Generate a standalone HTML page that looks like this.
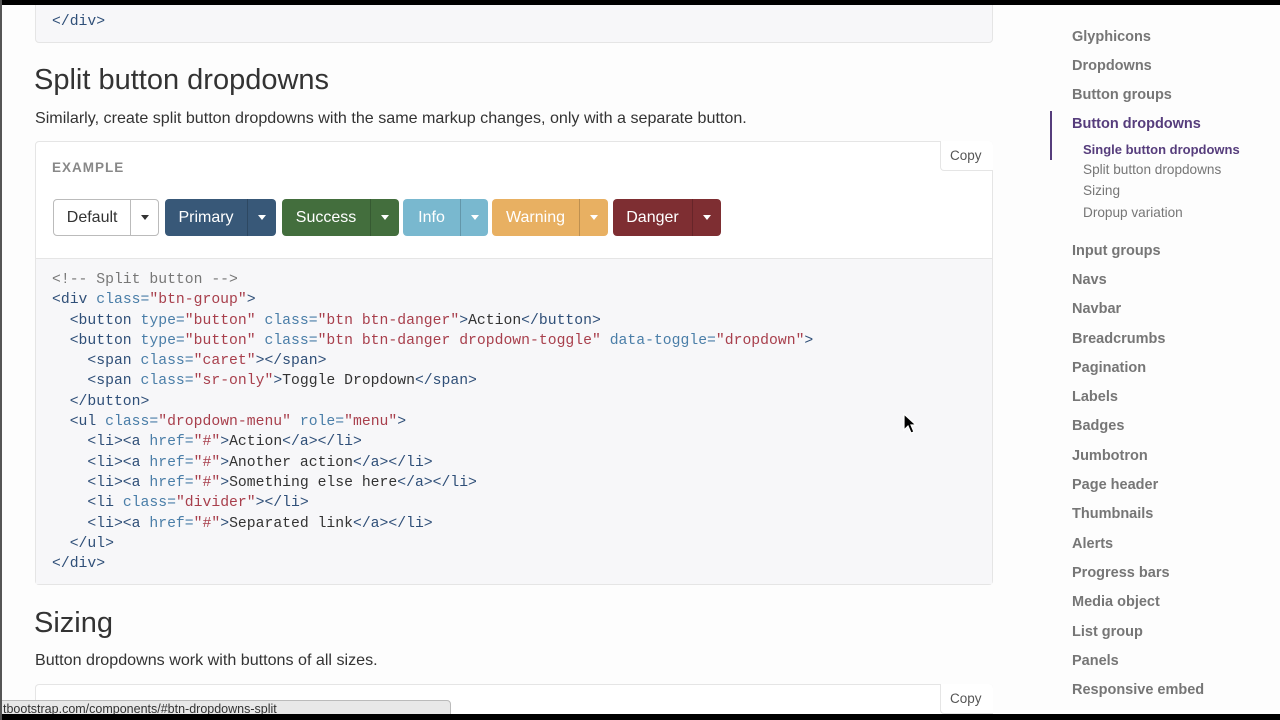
<!DOCTYPE html>
<html><head><meta charset="utf-8"><style>
*{box-sizing:border-box;margin:0;padding:0}
html,body{width:1280px;height:720px;overflow:hidden}
body{background:#fdfdfd;font-family:"Liberation Sans",sans-serif;color:#333;position:relative}
.abs{position:absolute}
.topbar{left:0;top:0;width:1280px;height:5px;background:#000}
.botbar{left:0;top:714px;width:1280px;height:6px;background:#000}
.leftbar{left:0;top:0;width:2px;height:720px;background:#555}
.box{border:1px solid #e5e5e5;border-radius:4px}
.code{background:#f7f7f9;font-family:"Liberation Mono",monospace;font-size:14.75px;line-height:20.3px;color:#333;white-space:pre}
.nt{color:#2f4f78}.na{color:#4a7ea8}.s{color:#a83f4c}.c{color:#777}
h2{font-size:29px;font-weight:500;color:#333}
p{font-size:16.1px}
.copy{border-left:1px solid #e5e5e5;border-bottom:1px solid #e5e5e5;font-size:13.5px;color:#555;padding:7px 9px;border-radius:0 4px 0 4px;background:#fff}
.btn{position:absolute;top:199px;height:37px;border-radius:4px;color:#fff;font-size:16px;display:flex}
.btn span{display:flex;align-items:center;justify-content:center;height:100%}
.btn .cr{border-left:1px solid rgba(0,0,0,.18)}
.btn .cr:after{content:"";border-top:5px solid currentColor;border-left:4.5px solid transparent;border-right:4.5px solid transparent}
.side{left:1072px;font-size:14.5px;font-weight:bold;color:#767676}
.sub{left:1083px;font-size:13.6px;color:#767676}
</style></head><body>
<div class="abs box code" style="left:35px;top:-20px;width:958px;height:63px;padding:0 16px;line-height:20px"><span style="position:absolute;top:31px;left:16px"><span class="nt">&lt;/div&gt;</span></span></div>

<h2 class="abs" style="left:34px;top:64px">Split button dropdowns</h2>
<p class="abs" style="left:35px;top:109px">Similarly, create split button dropdowns with the same markup changes, only with a separate button.</p>

<div class="abs" style="left:35px;top:141px;width:958px;height:444px;border:1px solid #e5e5e5;border-radius:4px;background:#fff"></div>
<div class="abs copy" style="left:940px;top:141px;width:53px;height:30px">Copy</div>
<div class="abs" style="left:52px;top:160px;font-size:13.5px;font-weight:bold;color:#888;letter-spacing:1px">EXAMPLE</div>

<div class="btn" style="left:53px;width:106px;background:#fff;border:1px solid #bbb;color:#333"><span style="width:77px">Default</span><span class="cr" style="width:28px;border-left-color:#bbb"></span></div>
<div class="btn" style="left:165px;width:111px;background:#385878"><span style="width:82px">Primary</span><span class="cr" style="width:29px"></span></div>
<div class="btn" style="left:282px;width:117px;background:#436e3d"><span style="width:88px">Success</span><span class="cr" style="width:29px"></span></div>
<div class="btn" style="left:403px;width:85px;background:#79b8cf"><span style="width:57px">Info</span><span class="cr" style="width:28px"></span></div>
<div class="btn" style="left:492px;width:116px;background:#e8b062"><span style="width:87px">Warning</span><span class="cr" style="width:29px"></span></div>
<div class="btn" style="left:613px;width:108px;background:#7e2e32"><span style="width:79px">Danger</span><span class="cr" style="width:29px"></span></div>

<div class="abs code" style="left:36px;top:258px;width:956px;height:326px;border-top:1px solid #e5e5e5;padding:11px 16px"><span class="c">&lt;!-- Split button --&gt;</span>
<span class="nt">&lt;div</span> <span class="na">class=</span><span class="s">"btn-group"</span><span class="nt">&gt;</span>
  <span class="nt">&lt;button</span> <span class="na">type=</span><span class="s">"button"</span> <span class="na">class=</span><span class="s">"btn btn-danger"</span><span class="nt">&gt;</span>Action<span class="nt">&lt;/button&gt;</span>
  <span class="nt">&lt;button</span> <span class="na">type=</span><span class="s">"button"</span> <span class="na">class=</span><span class="s">"btn btn-danger dropdown-toggle"</span> <span class="na">data-toggle=</span><span class="s">"dropdown"</span><span class="nt">&gt;</span>
    <span class="nt">&lt;span</span> <span class="na">class=</span><span class="s">"caret"</span><span class="nt">&gt;&lt;/span&gt;</span>
    <span class="nt">&lt;span</span> <span class="na">class=</span><span class="s">"sr-only"</span><span class="nt">&gt;</span>Toggle Dropdown<span class="nt">&lt;/span&gt;</span>
  <span class="nt">&lt;/button&gt;</span>
  <span class="nt">&lt;ul</span> <span class="na">class=</span><span class="s">"dropdown-menu"</span> <span class="na">role=</span><span class="s">"menu"</span><span class="nt">&gt;</span>
    <span class="nt">&lt;li&gt;&lt;a</span> <span class="na">href=</span><span class="s">"#"</span><span class="nt">&gt;</span>Action<span class="nt">&lt;/a&gt;&lt;/li&gt;</span>
    <span class="nt">&lt;li&gt;&lt;a</span> <span class="na">href=</span><span class="s">"#"</span><span class="nt">&gt;</span>Another action<span class="nt">&lt;/a&gt;&lt;/li&gt;</span>
    <span class="nt">&lt;li&gt;&lt;a</span> <span class="na">href=</span><span class="s">"#"</span><span class="nt">&gt;</span>Something else here<span class="nt">&lt;/a&gt;&lt;/li&gt;</span>
    <span class="nt">&lt;li</span> <span class="na">class=</span><span class="s">"divider"</span><span class="nt">&gt;&lt;/li&gt;</span>
    <span class="nt">&lt;li&gt;&lt;a</span> <span class="na">href=</span><span class="s">"#"</span><span class="nt">&gt;</span>Separated link<span class="nt">&lt;/a&gt;&lt;/li&gt;</span>
  <span class="nt">&lt;/ul&gt;</span>
<span class="nt">&lt;/div&gt;</span></div>

<svg class="abs" style="left:903px;top:413px" width="16" height="22" viewBox="0 0 16 22"><path d="M1 1 L1 17 L5 13 L8 20 L11 19 L8 12 L13 12 Z" fill="#000" stroke="#fff" stroke-width="1.2"/></svg>

<h2 class="abs" style="left:34px;top:607px">Sizing</h2>
<p class="abs" style="left:35px;top:651px">Button dropdowns work with buttons of all sizes.</p>
<div class="abs" style="left:35px;top:684px;width:958px;height:34px;border:1px solid #e5e5e5;border-bottom:none;border-radius:4px 4px 0 0;background:#fff"></div>
<div class="abs copy" style="left:940px;top:684px;width:53px;height:30px">Copy</div>

<div class="abs" style="left:0;top:700px;width:451px;height:16px;background:#e8e8e8;border:1px solid #bbb;border-radius:0 4px 0 0;font-size:12.5px;color:#333;padding-left:2px;line-height:16px;overflow:hidden">tbootstrap.com/components/#btn-dropdowns-split</div>

<div class="abs" style="left:1050px;top:111px;width:2px;height:49px;background:#563d7c"></div>
<div class="abs side" style="top:29px">Glyphicons</div>
<div class="abs side" style="top:58px">Dropdowns</div>
<div class="abs side" style="top:87px">Button groups</div>
<div class="abs side" style="top:116px;color:#563d7c">Button dropdowns</div>
<div class="abs sub" style="top:142px;color:#563d7c;font-weight:bold;font-size:13px">Single button dropdowns</div>
<div class="abs sub" style="top:162px">Split button dropdowns</div>
<div class="abs sub" style="top:183px">Sizing</div>
<div class="abs sub" style="top:205px">Dropup variation</div>
<div class="abs side" style="top:243px">Input groups</div>
<div class="abs side" style="top:272px">Navs</div>
<div class="abs side" style="top:301px">Navbar</div>
<div class="abs side" style="top:331px">Breadcrumbs</div>
<div class="abs side" style="top:360px">Pagination</div>
<div class="abs side" style="top:389px">Labels</div>
<div class="abs side" style="top:418px">Badges</div>
<div class="abs side" style="top:448px">Jumbotron</div>
<div class="abs side" style="top:477px">Page header</div>
<div class="abs side" style="top:506px">Thumbnails</div>
<div class="abs side" style="top:536px">Alerts</div>
<div class="abs side" style="top:565px">Progress bars</div>
<div class="abs side" style="top:594px">Media object</div>
<div class="abs side" style="top:624px">List group</div>
<div class="abs side" style="top:653px">Panels</div>
<div class="abs side" style="top:682px">Responsive embed</div>

<div class="abs topbar"></div>
<div class="abs botbar"></div>
<div class="abs leftbar"></div>
</body></html>
